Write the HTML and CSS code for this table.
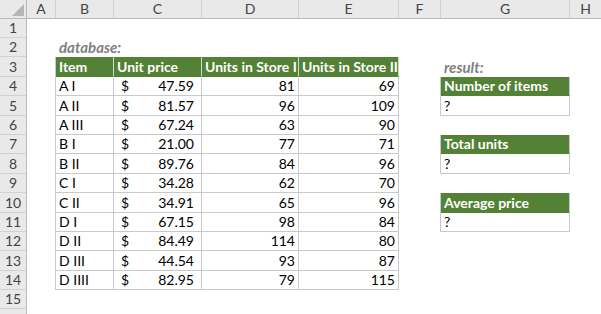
FILE: index.html
```html
<!DOCTYPE html>
<html lang="en">
<head>
    <meta charset="UTF-8">
    <title>database</title>
    <link rel="stylesheet" href="styles.css">
</head>
<body>
    <div class="sheet">
        <div class="corner"><span class="select-all"></span></div>
        <div class="col-heads">
            <div class="col-head col-a">A</div>
            <div class="col-head col-b">B</div>
            <div class="col-head col-c">C</div>
            <div class="col-head col-d">D</div>
            <div class="col-head col-e">E</div>
            <div class="col-head col-f">F</div>
            <div class="col-head col-g">G</div>
            <div class="col-head col-h">H</div>
        </div>
        <div class="row-heads">
            <div class="row-head">1</div>
            <div class="row-head">2</div>
            <div class="row-head">3</div>
            <div class="row-head">4</div>
            <div class="row-head">5</div>
            <div class="row-head">6</div>
            <div class="row-head">7</div>
            <div class="row-head">8</div>
            <div class="row-head">9</div>
            <div class="row-head">10</div>
            <div class="row-head">11</div>
            <div class="row-head">12</div>
            <div class="row-head">13</div>
            <div class="row-head">14</div>
            <div class="row-head">15</div>
            <div class="row-head"></div>
        </div>

        <div class="cells">
            <div class="note db-note">database:</div>

            <div class="db-table">
                <div class="th">Item</div>
                <div class="th">Unit price</div>
                <div class="th">Units in Store I</div>
                <div class="th">Units in Store II</div>

                <div class="td">A I</div><div class="td money"><span>$</span><span>47.59</span></div><div class="td num">81</div><div class="td num">69</div>
                <div class="td">A II</div><div class="td money"><span>$</span><span>81.57</span></div><div class="td num">96</div><div class="td num">109</div>
                <div class="td">A III</div><div class="td money"><span>$</span><span>67.24</span></div><div class="td num">63</div><div class="td num">90</div>
                <div class="td">B I</div><div class="td money"><span>$</span><span>21.00</span></div><div class="td num">77</div><div class="td num">71</div>
                <div class="td">B II</div><div class="td money"><span>$</span><span>89.76</span></div><div class="td num">84</div><div class="td num">96</div>
                <div class="td">C I</div><div class="td money"><span>$</span><span>34.28</span></div><div class="td num">62</div><div class="td num">70</div>
                <div class="td">C II</div><div class="td money"><span>$</span><span>34.91</span></div><div class="td num">65</div><div class="td num">96</div>
                <div class="td">D I</div><div class="td money"><span>$</span><span>67.15</span></div><div class="td num">98</div><div class="td num">84</div>
                <div class="td">D II</div><div class="td money"><span>$</span><span>84.49</span></div><div class="td num">114</div><div class="td num">80</div>
                <div class="td">D III</div><div class="td money"><span>$</span><span>44.54</span></div><div class="td num">93</div><div class="td num">87</div>
                <div class="td">D IIII</div><div class="td money"><span>$</span><span>82.95</span></div><div class="td num">79</div><div class="td num">115</div>
            </div>

            <div class="note res-note">result:</div>

            <div class="res-box res-count">
                <div class="th">Number of items</div>
                <div class="td">?</div>
            </div>
            <div class="res-box res-units">
                <div class="th">Total units</div>
                <div class="td">?</div>
            </div>
            <div class="res-box res-price">
                <div class="th">Average price</div>
                <div class="td">?</div>
            </div>
        </div>
    </div>
</body>
</html>
```

FILE: styles.css
```css
body {
    margin: 0;
    background: #fff;
    font-family: 'Lato', 'Liberation Sans', sans-serif;
    font-size: 14px;
    color: #000;
    overflow: hidden;
}
.sheet {
    display: grid;
    grid-template-columns: 27px 1fr;
    grid-template-rows: 18.6px 1fr;
    width: 601px;
    height: 314px;
}
.corner {
    background: #e9e9e9;
    border-right: 1px solid #b9b9b9;
    border-bottom: 1px solid #b9b9b9;
    box-sizing: border-box;
    display: flex;
    justify-content: flex-end;
    align-items: flex-end;
    padding: 0 2px 2px 0;
}
.select-all {
    width: 0;
    height: 0;
    border-left: 12px solid transparent;
    border-bottom: 12px solid #b6b6b6;
}
.col-heads {
    display: flex;
    background: #e9e9e9;
    border-bottom: 1px solid #b9b9b9;
    box-sizing: border-box;
}
.col-head {
    box-sizing: border-box;
    border-right: 1px solid #d2d2d2;
    text-align: center;
    color: #444;
    line-height: 18px;
    flex: none;
}
.col-a { width: 29px; }
.col-b { width: 58px; }
.col-c { width: 88px; }
.col-d { width: 97px; }
.col-e { width: 100px; }
.col-f { width: 42px; }
.col-g { width: 129px; }
.col-h { flex: 1; border-right: none; }

.row-heads {
    display: grid;
    grid-auto-rows: 19.4px;
    background: #e9e9e9;
    border-right: 1px solid #b9b9b9;
    box-sizing: border-box;
}
.row-head {
    box-sizing: border-box;
    border-bottom: 1px solid #d2d2d2;
    text-align: center;
    color: #444;
    display: flex;
    align-items: flex-end;
    justify-content: center;
    padding-bottom: 1px;
}

.cells {
    display: grid;
    grid-template-columns: 29px 58px 88px 97px 100px 42px 129px 1fr;
    grid-template-rows: repeat(16, 19.4px);
}
.note {
    font-style: italic;
    font-weight: bold;
    font-size: 15px;
    color: #7f7f7f;
    display: flex;
    align-items: flex-end;
    padding: 0 0 1px 3px;
}
.db-note {
    grid-row: 2;
    grid-column: 2 / 5;
}
.res-note {
    grid-row: 3;
    grid-column: 7;
}

.db-table {
    grid-row: 3 / 15;
    grid-column: 2 / 6;
    margin-left: -1px;
    border-left: 1px solid #c9c9c9;
    display: grid;
    grid-template-columns: 58px 88px 97px 100px;
    grid-auto-rows: 19.4px;
}
.th, .td {
    box-sizing: border-box;
    border-right: 1px solid #c9c9c9;
    border-bottom: 1px solid #c9c9c9;
    display: flex;
    align-items: flex-end;
    padding: 0 3px 1px 3px;
    white-space: nowrap;
}
.th {
    background: #538135;
    color: #fff;
    font-weight: bold;
    border-right-color: #cfdcc6;
    border-bottom-color: #538135;
}
.th:last-child {
    border-right-color: #c9c9c9;
}
.num {
    justify-content: flex-end;
}
.money {
    justify-content: space-between;
    padding-left: 7px;
    padding-right: 7px;
}

.res-box {
    grid-column: 7;
    margin-left: -1px;
    border-left: 1px solid #c9c9c9;
    display: grid;
    grid-auto-rows: 19.4px;
}
.res-box .th {
    border-right-color: #c9c9c9;
}
.res-count { grid-row: 4 / 6; }
.res-units { grid-row: 7 / 9; }
.res-price { grid-row: 10 / 12; }
```
